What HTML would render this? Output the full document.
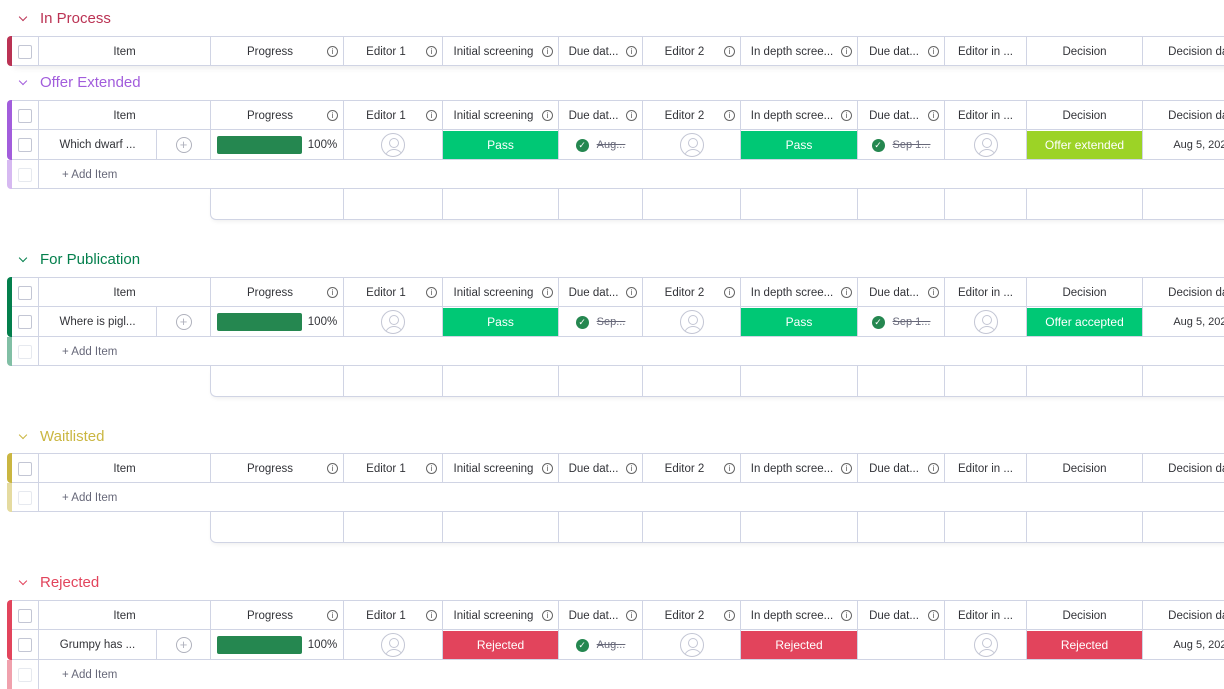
<!DOCTYPE html>
<html><head><meta charset="utf-8"><style>
*{box-sizing:border-box;margin:0;padding:0}
body{width:1224px;height:689px;overflow:hidden;background:#fff;font-family:"Liberation Sans",sans-serif;color:#323338;font-size:11.5px;position:relative}
.t{position:absolute;left:18px;font-size:15px;display:flex;align-items:center}
.t .ch{width:10px;height:10px;margin-right:12px;position:relative}
.t .ch:before{content:"";position:absolute;left:2px;top:0;width:5px;height:5px;border-right:1.5px solid currentColor;border-bottom:1.5px solid currentColor;transform:rotate(45deg)}
.bar{position:absolute;left:7px;width:6px;border-radius:4px 0 0 4px}
.row{position:absolute;left:12px;height:30px;display:flex;border-bottom:1px solid #d0d4e4;background:#fff}
.row.h{border-top:1px solid #d0d4e4}
.c{border-right:1px solid #d0d4e4;height:100%;display:flex;align-items:center;justify-content:center;position:relative;white-space:nowrap;overflow:hidden;padding-top:1px}
.cb{width:27px}
.cb i{width:14px;height:14px;border:1px solid #c3c6d4;border-radius:2px;display:block}
.w1{width:172px}.w2{width:133px}.w3{width:99px}.w4{width:116px}.w5{width:84px}.w6{width:98px}.w7{width:117px}.w8{width:87px}.w9{width:82px}.w10{width:116px}.w11{width:120px;border-right:none}
.info{position:absolute;right:5px;top:9px;width:11px;height:11px;border:1px solid #666;border-radius:50%;font-size:8px;line-height:9px;text-align:center;color:#555}
.h .c.i{padding-right:14px}
.sh{box-shadow:0 4px 6px -2px rgba(0,0,0,.08)}
.pb{width:85px;height:18px;background:#258750;border-radius:2px;margin-right:6px}
.av{width:24px;height:24px;border:1px solid #c3c6d4;border-radius:50%;position:relative;overflow:hidden}
.av:before{content:"";position:absolute;left:7px;top:4px;width:8px;height:8px;border:1px solid #c3c6d4;border-radius:50%}
.av:after{content:"";position:absolute;left:3px;top:15px;width:16px;height:14px;border:1px solid #c3c6d4;border-radius:50%}
.st{color:#fff;width:100%;height:100%;display:flex;align-items:center;justify-content:center;font-size:12px}
.ok{width:13px;height:13px;border-radius:50%;background:#258750;color:#fff;font-size:9px;line-height:13px;text-align:center;margin-right:8px}
.s{text-decoration:line-through;color:#676879;font-size:11px}
.add{flex:1;justify-content:flex-start;padding-left:23px;border-right:none;color:#676879}
.ft{position:absolute;left:210px;height:31px;display:flex;border:1px solid #d0d4e4;border-top:none;border-right:none;border-radius:0 0 0 6px;box-shadow:0 3px 5px -2px rgba(0,0,0,.08)}
.ft .c{height:100%}
.bub{width:16px;height:16px;border:1.3px solid #b0b2bd;border-radius:50%;color:#b0b2bd;font-size:13px;line-height:13px;text-align:center}
</style></head><body>

<div class="t" style="top:10px;color:#bb3354"><span class="ch"></span>In Process</div>
<div class="bar" style="top:36px;height:30px;background:#bb3354"></div>
<div class="row h sh" style="top:36px"><div class="c cb"><i></i></div><div class="c w1">Item</div><div class="c w2 i">Progress<span class="info">i</span></div><div class="c w3 i">Editor 1<span class="info">i</span></div><div class="c w4 i">Initial screening<span class="info">i</span></div><div class="c w5 i">Due dat...<span class="info">i</span></div><div class="c w6 i">Editor 2<span class="info">i</span></div><div class="c w7 i">In depth scree...<span class="info">i</span></div><div class="c w8 i">Due dat...<span class="info">i</span></div><div class="c w9">Editor in ...</div><div class="c w10">Decision</div><div class="c w11">Decision date</div></div>

<div class="t" style="top:74px;color:#a25ddc"><span class="ch"></span>Offer Extended</div>
<div class="bar" style="top:100px;height:60px;background:#a25ddc"></div>
<div class="bar" style="top:160px;height:29px;background:#d6b9f1;border-radius:0 0 0 4px"></div>
<div class="row h" style="top:100px"><div class="c cb"><i></i></div><div class="c w1">Item</div><div class="c w2 i">Progress<span class="info">i</span></div><div class="c w3 i">Editor 1<span class="info">i</span></div><div class="c w4 i">Initial screening<span class="info">i</span></div><div class="c w5 i">Due dat...<span class="info">i</span></div><div class="c w6 i">Editor 2<span class="info">i</span></div><div class="c w7 i">In depth scree...<span class="info">i</span></div><div class="c w8 i">Due dat...<span class="info">i</span></div><div class="c w9">Editor in ...</div><div class="c w10">Decision</div><div class="c w11">Decision date</div></div>
<div class="row" style="top:130px"><div class="c cb"><i></i></div><div class="c" style="width:118px">Which dwarf ...</div><div class="c" style="width:54px"><span class="bub">+</span></div><div class="c w2"><span class="pb"></span>100%</div><div class="c w3"><span class="av"></span></div><div class="c w4"><div class="st" style="background:#00c875">Pass</div></div><div class="c w5"><span class="ok">✓</span><span class="s">Aug...</span></div><div class="c w6"><span class="av"></span></div><div class="c w7"><div class="st" style="background:#00c875">Pass</div></div><div class="c w8"><span class="ok">✓</span><span class="s">Sep 1...</span></div><div class="c w9"><span class="av"></span></div><div class="c w10"><div class="st" style="background:#9cd326">Offer extended</div></div><div class="c w11" style="font-size:11px">Aug 5, 2024</div></div>
<div class="row" style="top:160px;width:1212px;height:29px"><div class="c cb"><i style="border-color:#e6e9ef"></i></div><div class="c add">+ Add Item</div></div>
<div class="ft" style="top:189px"><div class="c w2"></div><div class="c w3"></div><div class="c w4"></div><div class="c w5"></div><div class="c w6"></div><div class="c w7"></div><div class="c w8"></div><div class="c w9"></div><div class="c w10"></div><div class="c w11"></div></div>

<div class="t" style="top:251px;color:#037f4c"><span class="ch"></span>For Publication</div>
<div class="bar" style="top:277px;height:60px;background:#037f4c"></div>
<div class="bar" style="top:337px;height:29px;background:#81bfa5;border-radius:0 0 0 4px"></div>
<div class="row h" style="top:277px"><div class="c cb"><i></i></div><div class="c w1">Item</div><div class="c w2 i">Progress<span class="info">i</span></div><div class="c w3 i">Editor 1<span class="info">i</span></div><div class="c w4 i">Initial screening<span class="info">i</span></div><div class="c w5 i">Due dat...<span class="info">i</span></div><div class="c w6 i">Editor 2<span class="info">i</span></div><div class="c w7 i">In depth scree...<span class="info">i</span></div><div class="c w8 i">Due dat...<span class="info">i</span></div><div class="c w9">Editor in ...</div><div class="c w10">Decision</div><div class="c w11">Decision date</div></div>
<div class="row" style="top:307px"><div class="c cb"><i></i></div><div class="c" style="width:118px">Where is pigl...</div><div class="c" style="width:54px"><span class="bub">+</span></div><div class="c w2"><span class="pb"></span>100%</div><div class="c w3"><span class="av"></span></div><div class="c w4"><div class="st" style="background:#00c875">Pass</div></div><div class="c w5"><span class="ok">✓</span><span class="s">Sep...</span></div><div class="c w6"><span class="av"></span></div><div class="c w7"><div class="st" style="background:#00c875">Pass</div></div><div class="c w8"><span class="ok">✓</span><span class="s">Sep 1...</span></div><div class="c w9"><span class="av"></span></div><div class="c w10"><div class="st" style="background:#00c875">Offer accepted</div></div><div class="c w11" style="font-size:11px">Aug 5, 2024</div></div>
<div class="row" style="top:337px;width:1212px;height:29px"><div class="c cb"><i style="border-color:#e6e9ef"></i></div><div class="c add">+ Add Item</div></div>
<div class="ft" style="top:366px"><div class="c w2"></div><div class="c w3"></div><div class="c w4"></div><div class="c w5"></div><div class="c w6"></div><div class="c w7"></div><div class="c w8"></div><div class="c w9"></div><div class="c w10"></div><div class="c w11"></div></div>

<div class="t" style="top:428px;color:#cab641"><span class="ch"></span>Waitlisted</div>
<div class="bar" style="top:453px;height:30px;background:#cab641"></div>
<div class="bar" style="top:483px;height:29px;background:#e5dba0;border-radius:0 0 0 4px"></div>
<div class="row h" style="top:453px"><div class="c cb"><i></i></div><div class="c w1">Item</div><div class="c w2 i">Progress<span class="info">i</span></div><div class="c w3 i">Editor 1<span class="info">i</span></div><div class="c w4 i">Initial screening<span class="info">i</span></div><div class="c w5 i">Due dat...<span class="info">i</span></div><div class="c w6 i">Editor 2<span class="info">i</span></div><div class="c w7 i">In depth scree...<span class="info">i</span></div><div class="c w8 i">Due dat...<span class="info">i</span></div><div class="c w9">Editor in ...</div><div class="c w10">Decision</div><div class="c w11">Decision date</div></div>
<div class="row" style="top:483px;width:1212px;height:29px"><div class="c cb"><i style="border-color:#e6e9ef"></i></div><div class="c add">+ Add Item</div></div>
<div class="ft" style="top:512px"><div class="c w2"></div><div class="c w3"></div><div class="c w4"></div><div class="c w5"></div><div class="c w6"></div><div class="c w7"></div><div class="c w8"></div><div class="c w9"></div><div class="c w10"></div><div class="c w11"></div></div>

<div class="t" style="top:574px;color:#e2445c"><span class="ch"></span>Rejected</div>
<div class="bar" style="top:600px;height:60px;background:#e2445c"></div>
<div class="bar" style="top:660px;height:29px;background:#f0a1ad;border-radius:0"></div>
<div class="row h" style="top:600px"><div class="c cb"><i></i></div><div class="c w1">Item</div><div class="c w2 i">Progress<span class="info">i</span></div><div class="c w3 i">Editor 1<span class="info">i</span></div><div class="c w4 i">Initial screening<span class="info">i</span></div><div class="c w5 i">Due dat...<span class="info">i</span></div><div class="c w6 i">Editor 2<span class="info">i</span></div><div class="c w7 i">In depth scree...<span class="info">i</span></div><div class="c w8 i">Due dat...<span class="info">i</span></div><div class="c w9">Editor in ...</div><div class="c w10">Decision</div><div class="c w11">Decision date</div></div>
<div class="row" style="top:630px"><div class="c cb"><i></i></div><div class="c" style="width:118px">Grumpy has ...</div><div class="c" style="width:54px"><span class="bub">+</span></div><div class="c w2"><span class="pb"></span>100%</div><div class="c w3"><span class="av"></span></div><div class="c w4"><div class="st" style="background:#e2445c">Rejected</div></div><div class="c w5"><span class="ok">✓</span><span class="s">Aug...</span></div><div class="c w6"><span class="av"></span></div><div class="c w7"><div class="st" style="background:#e2445c">Rejected</div></div><div class="c w8"></div><div class="c w9"><span class="av"></span></div><div class="c w10"><div class="st" style="background:#e2445c">Rejected</div></div><div class="c w11" style="font-size:11px">Aug 5, 2024</div></div>
<div class="row" style="top:660px;width:1212px;height:29px;border-bottom:none"><div class="c cb"><i style="border-color:#e6e9ef"></i></div><div class="c add">+ Add Item</div></div>

</body></html>
